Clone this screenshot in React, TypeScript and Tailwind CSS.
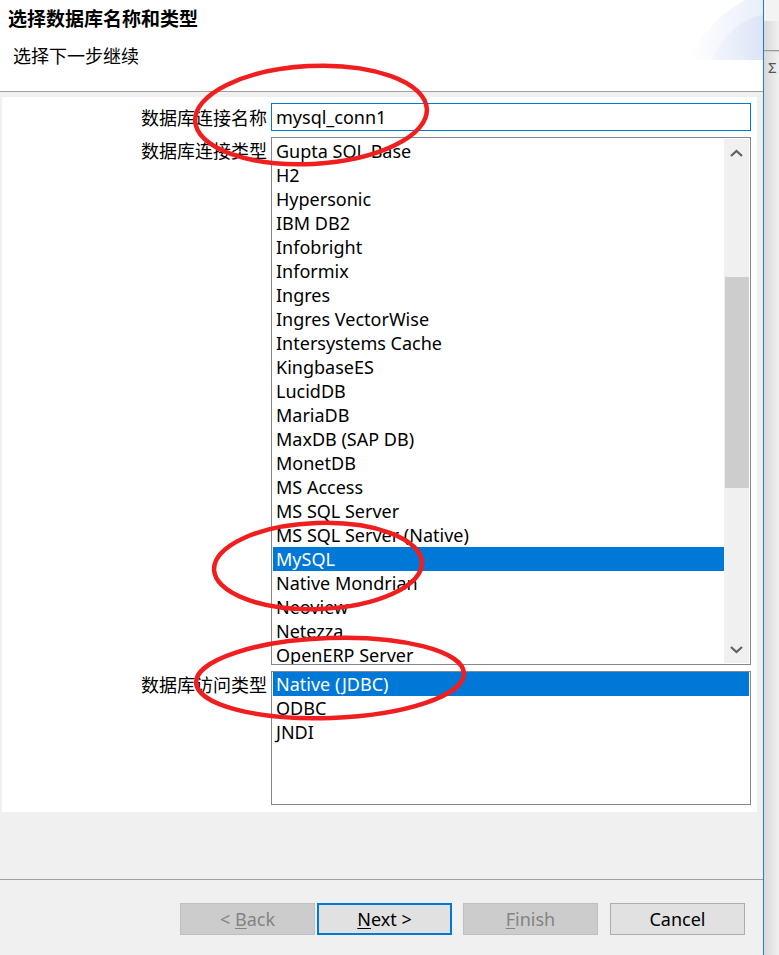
import React from "react";

const DB_TYPES = [
  "Gupta SQL Base",
  "H2",
  "Hypersonic",
  "IBM DB2",
  "Infobright",
  "Informix",
  "Ingres",
  "Ingres VectorWise",
  "Intersystems Cache",
  "KingbaseES",
  "LucidDB",
  "MariaDB",
  "MaxDB (SAP DB)",
  "MonetDB",
  "MS Access",
  "MS SQL Server",
  "MS SQL Server (Native)",
  "MySQL",
  "Native Mondrian",
  "Neoview",
  "Netezza",
  "OpenERP Server",
];

const ACCESS_TYPES = ["Native (JDBC)", "ODBC", "JNDI"];

const UI_FONT = "font-['Segoe_UI','Noto_Sans','Noto_Sans_CJK_SC',sans-serif]";
const CJK_FONT = "font-['Noto_Sans_CJK_SC',sans-serif]";

function Chevron({ dir }: { dir: "up" | "down" }) {
  return (
    <svg width="13" height="8" viewBox="0 0 13 8" className="text-[#606060]">
      {dir === "up" ? (
        <polyline points="1,7 6.5,2 12,7" fill="none" stroke="currentColor" strokeWidth="2.2" />
      ) : (
        <polyline points="1,1 6.5,6 12,1" fill="none" stroke="currentColor" strokeWidth="2.2" />
      )}
    </svg>
  );
}

function Btn({ under, rest, pre = "", kind }: { under: string; rest: string; pre?: string; kind: "disabled" | "default" | "normal" }) {
  const cls =
    kind === "disabled"
      ? "bg-[#cccccc] border border-[#bfbfbf] text-[#838383]"
      : kind === "default"
      ? "bg-[#e1e1e1] border-2 border-[#0078d7] text-black"
      : "bg-[#e1e1e1] border border-[#adadad] text-black";
  return (
    <div className={`w-[135px] h-[32px] flex items-center justify-center text-[18px] ${cls}`}>
      <span>
        {pre}
        <span className="underline underline-offset-2">{under}</span>
        {rest}
      </span>
    </div>
  );
}

export default function App() {
  const selectedType = "MySQL";
  return (
    <div className={`relative w-[779px] h-[955px] flex bg-[#f0f0f0] overflow-hidden ${UI_FONT}`}>
      <div className="w-[763px] h-full flex flex-col bg-[#f0f0f0]">
        {/* header */}
        <div className="relative h-[92px] bg-white border-b border-[#a0a0a0] shrink-0">
          <svg className="absolute right-0 top-0" width="80" height="60" viewBox="0 0 80 60">
            <defs>
              <linearGradient id="g1" x1="0" y1="0" x2="1" y2="0">
                <stop offset="0" stopColor="#ffffff" />
                <stop offset="1" stopColor="#e9eefa" />
              </linearGradient>
              <linearGradient id="g2" x1="0" y1="0" x2="1" y2="0">
                <stop offset="0" stopColor="#f4f6fd" />
                <stop offset="1" stopColor="#dce4f6" />
              </linearGradient>
            </defs>
            <path d="M80 0 L62 0 Q 25 20 5 60 L80 60 Z" fill="url(#g1)" />
            <path d="M80 15 Q 48 20 28 60 L80 60 Z" fill="url(#g2)" />
          </svg>
          <div className={`absolute left-[8px] top-[4px] text-[19px] font-bold text-black ${CJK_FONT}`}>选择数据库名称和类型</div>
          <div className={`absolute left-[13px] top-[42px] text-[18px] text-black ${CJK_FONT}`}>选择下一步继续</div>
        </div>

        {/* content */}
        <div className="pt-[5px] pl-[2px] pr-[6px]">
          <div className="bg-white h-[715px] pt-[6px] pr-[6px] flex flex-col gap-[6px]">
            <div className="flex gap-[4px] items-start">
              <div className={`w-[265px] text-right text-[18px] leading-[28px] ${CJK_FONT}`}>数据库连接名称</div>
              <div className="w-[480px] h-[28px] border border-[#0078d7] pl-[4px] flex items-center text-[18px] text-black">mysql_conn1</div>
            </div>

            <div className="flex gap-[4px] items-start">
              <div className={`w-[265px] text-right text-[18px] leading-[26px] ${CJK_FONT}`}>数据库连接类型</div>
              <div className="w-[480px] h-[528px] border border-[#828790] flex overflow-hidden">
                <div className="flex-1 pt-[1px] pl-[1px] flex flex-col">
                  {DB_TYPES.map((t) => (
                    <div
                      key={t}
                      className={`h-[24px] shrink-0 pl-[3px] flex items-center text-[18px] whitespace-nowrap ${
                        t === selectedType ? "bg-[#0078d7] text-white" : "text-black"
                      }`}
                    >
                      {t}
                    </div>
                  ))}
                </div>
                <div className="w-[25px] my-[1px] mr-[1px] bg-[#f0f0f0] flex flex-col items-center">
                  <div className="h-[28px] flex items-center justify-center">
                    <Chevron dir="up" />
                  </div>
                  <div className="h-[110px]" />
                  <div className="w-[24px] h-[211px] bg-[#cdcdcd]" />
                  <div className="flex-1" />
                  <div className="h-[26px] flex items-center justify-center">
                    <Chevron dir="down" />
                  </div>
                </div>
              </div>
            </div>

            <div className="flex gap-[4px] items-start">
              <div className={`w-[265px] text-right text-[18px] leading-[26px] ${CJK_FONT}`}>数据库访问类型</div>
              <div className="w-[480px] h-[134px] border border-[#828790] px-[1px] flex flex-col">
                {ACCESS_TYPES.map((t, i) => (
                  <div
                    key={t}
                    className={`h-[24px] shrink-0 pl-[3px] flex items-center text-[18px] ${
                      i === 0 ? "bg-[#0078d7] text-white" : "text-black"
                    }`}
                  >
                    {t}
                  </div>
                ))}
              </div>
            </div>
          </div>
        </div>

        <div className="h-[67px] shrink-0" />
        <div className="border-t border-[#a0a0a0] flex-1 flex justify-end items-start pt-[23px] pr-[18px]">
          <div className="flex">
            <Btn kind="disabled" pre="< " under="B" rest="ack" />
            <div className="w-[2px]" />
            <Btn kind="default" under="N" rest="ext >" />
            <div className="w-[11px]" />
            <Btn kind="disabled" under="F" rest="inish" />
            <div className="w-[12px]" />
            <Btn kind="normal" under="" rest="Cancel" />
          </div>
        </div>
      </div>

      {/* dialog edge + background window */}
      <div className="w-[1px] h-full bg-[#1e7fd8]" />
      <div className="w-[15px] h-full flex flex-col bg-gradient-to-r from-[#d9d9d9] to-[#f0f0f0]">
        <div className="h-[21px] bg-[#f3f3f3]" />
        <div className="h-[29px]" />
        <div className="h-[1px] bg-[#9a9a9a]" />
        <div className="h-[1px] bg-[#d0d0d0]" />
        <div className="pl-[4px] text-[15px] text-[#555] leading-[30px]">Σ</div>
        <div className="flex-1" />
      </div>

      {/* red annotation ellipses */}
      <svg className="absolute inset-0 pointer-events-none" width="779" height="955" viewBox="0 0 779 955">
        <ellipse cx="311" cy="115" rx="116" ry="49" transform="rotate(-3 311 115)" fill="none" stroke="#f01e1e" strokeWidth="4.5" />
        <ellipse cx="318" cy="566" rx="104" ry="43" transform="rotate(-2 318 566)" fill="none" stroke="#f01e1e" strokeWidth="4.5" />
        <ellipse cx="330" cy="678" rx="134" ry="40" transform="rotate(-2 330 678)" fill="none" stroke="#f01e1e" strokeWidth="4.5" />
      </svg>
    </div>
  );
}
